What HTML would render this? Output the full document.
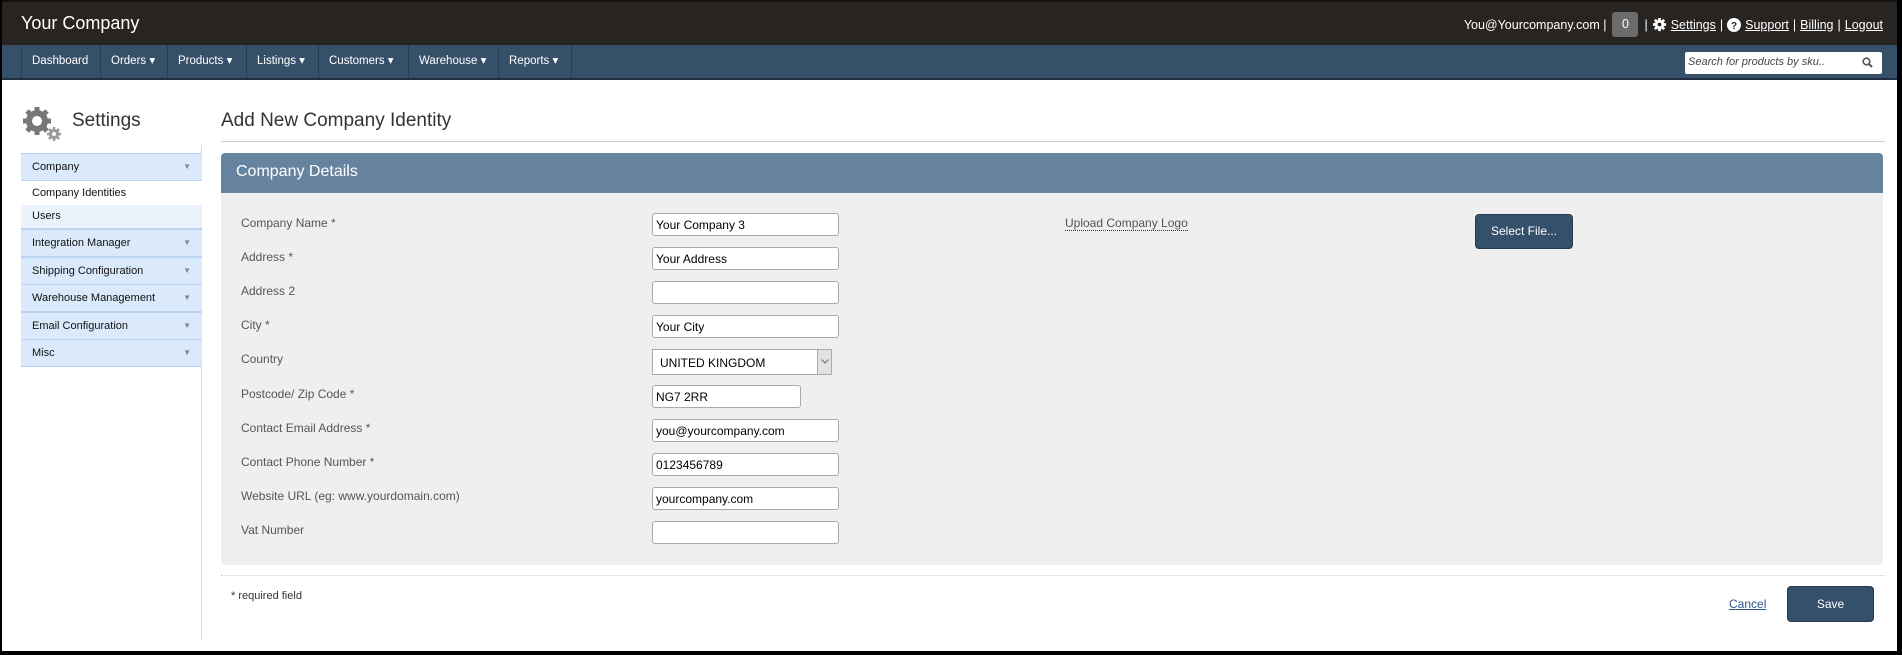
<!DOCTYPE html>
<html><head><meta charset="utf-8"><style>
*{box-sizing:border-box;margin:0;padding:0}
body{width:1902px;height:655px;overflow:hidden;background:#000;font-family:"Liberation Sans",sans-serif;position:relative}
.page{position:absolute;left:2px;top:0;width:1895px;height:651px;background:#fff}
.top{position:absolute;left:0;top:0;width:1895px;height:45px;background:#282422;border-top:2px solid #111}
.brand{position:absolute;left:19px;top:11px;color:#fff;font-size:18px}
.tr{position:absolute;right:14px;top:14px;color:#fff;font-size:12.5px;display:flex;align-items:center;gap:4px}
.tr a{color:#fff;text-decoration:underline}
.badge{display:inline-block;background:#6b6b6b;border-radius:3px;width:26px;height:25px;text-align:center;line-height:25px;margin:-4px 2px}
.nav{position:absolute;left:0;top:45px;width:1895px;height:35px;background:#36506a;border-bottom:2px solid #1e2e3e}
.nav span{position:absolute;top:0;height:33px;line-height:33px;color:#fff;font-size:11.5px;border-left:1px solid #283d52;padding-left:10px}
.search{position:absolute;left:1683px;top:7px;width:197px;height:22px;background:#fff;border-radius:2px;font-size:11px;font-style:italic;color:#444;padding:4px 3px}
.sidebar{position:absolute;left:19px;top:145px;width:181px;height:495px;border-right:1px solid #c5dcf3}
.sb{position:absolute;left:0;width:181px;font-size:11px;color:#111;padding-left:11px;background:#dbeafb;border-top:1px solid #b8d4f0;border-bottom:1px solid #b8d4f0}
.sb i{position:absolute;right:11px;font-style:normal;color:#7a8a9a;font-size:8px}
.h1{position:absolute;font-size:19px;color:#333}
.panel{position:absolute;left:221px;top:153px;width:1662px;height:412px;background:#efefef;border-radius:4px;overflow:hidden}
.ph{height:40px;background:#66849f;color:#fff;font-size:16px;padding:10px 15px}
.lab{position:absolute;left:20px;font-size:12px;color:#555}
.inp{position:absolute;left:431px;width:187px;height:23px;background:#fff;border:1px solid #aaa;border-radius:3px;font-size:12px;color:#000;padding:4px 3px}
.btn{position:absolute;background:#34506b;color:#fff;border-radius:4px;font-size:12px;text-align:center;border:1px solid #263c52}
</style></head><body><div class="page">
<div class="top"><div class="brand">Your Company</div>
<div class="tr">You@Yourcompany.com |<span class="badge">0</span>| <svg width="15" height="15" viewBox="0 0 16 16"><circle cx="8" cy="8" r="5" fill="#fff"/><g stroke="#fff" stroke-width="3"><path d="M8 1v14M1 8h14M3 3l10 10M13 3L3 13"/></g><circle cx="8" cy="8" r="2" fill="#282422"/></svg><a>Settings</a> | <svg width="14" height="14" viewBox="0 0 14 14"><circle cx="7" cy="7" r="7" fill="#fff"/><text x="7" y="11" font-size="10" font-weight="bold" text-anchor="middle" fill="#282422" font-family="Liberation Sans">?</text></svg> <a>Support</a> | <a>Billing</a> | <a>Logout</a></div></div>
<div class="nav">
<span style="left:19px;width:79px">Dashboard</span>
<span style="left:98px;width:67px">Orders ▾</span>
<span style="left:165px;width:79px">Products ▾</span>
<span style="left:244px;width:72px">Listings ▾</span>
<span style="left:316px;width:90px">Customers ▾</span>
<span style="left:406px;width:90px">Warehouse ▾</span>
<span style="left:496px;width:74px;border-right:1px solid #283d52">Reports ▾</span>
<div class="search">Search for products by sku..<svg style="position:absolute;right:9px;top:5px" width="11" height="11" viewBox="0 0 11 11"><circle cx="4.5" cy="4.5" r="3.3" fill="none" stroke="#555" stroke-width="1.6"/><path d="M7 7l3 3" stroke="#555" stroke-width="2"/></svg></div>
</div>
<svg style="position:absolute;left:20px;top:106px" width="44" height="38" viewBox="0 0 44 38"><g fill="#777"><circle cx="15" cy="15" r="11"/><g stroke="#777" stroke-width="5"><path d="M15 1v28M1 15h28M5 5l20 20M25 5L5 25"/></g></g><circle cx="15" cy="15" r="5" fill="#fff"/><g fill="#999"><circle cx="32" cy="28" r="5"/><g stroke="#999" stroke-width="2.5"><path d="M32 21v14M25 28h14M27 23l10 10M37 23L27 33"/></g></g><circle cx="32" cy="28" r="2" fill="#fff"/></svg>
<div class="h1" style="left:70px;top:110px">Settings</div>
<div class="sidebar">
<div class="sb" style="top:8px;height:28px;line-height:26px">Company<i>▼</i></div>
<div class="sb" style="top:36px;height:24px;line-height:24px;background:#fff;border:none">Company Identities</div>
<div class="sb" style="top:60px;height:24px;line-height:22px;background:#eaf3fc;border-top:none">Users</div>
<div class="sb" style="top:84px;height:28px;line-height:26px">Integration Manager<i>▼</i></div>
<div class="sb" style="top:112px;height:28px;line-height:26px">Shipping Configuration<i>▼</i></div>
<div class="sb" style="top:139px;height:28px;line-height:26px">Warehouse Management<i>▼</i></div>
<div class="sb" style="top:167px;height:28px;line-height:26px">Email Configuration<i>▼</i></div>
<div class="sb" style="top:194px;height:28px;line-height:26px">Misc<i>▼</i></div>
</div>
<div class="h1" style="left:219px;top:110px">Add New Company Identity</div>
<div style="position:absolute;left:219px;top:141px;width:1664px;height:1px;background:#ccc"></div>
<div class="panel" style="left:219px"><div class="ph">Company Details</div>
<div class="lab" style="top:63px">Company Name *</div><div class="inp" style="top:60px">Your Company 3</div>
<div class="lab" style="top:97px">Address *</div><div class="inp" style="top:94px">Your Address</div>
<div class="lab" style="top:131px">Address 2</div><div class="inp" style="top:128px"></div>
<div class="lab" style="top:165px">City *</div><div class="inp" style="top:162px">Your City</div>
<div class="lab" style="top:199px">Country</div><div class="inp" style="top:196px;width:180px;height:26px;padding:6px 7px;border-radius:0">UNITED KINGDOM<span style="position:absolute;right:0;top:0;width:14px;height:24px;background:#e2e2e2;border-left:1px solid #aaa"><svg style="position:absolute;left:3px;top:9px" width="8" height="5" viewBox="0 0 8 5"><path d="M0.5 0.5L4 4L7.5 0.5" fill="none" stroke="#666"/></svg></span></div>
<div class="lab" style="top:234px">Postcode/ Zip Code *</div><div class="inp" style="top:232px;width:149px">NG7 2RR</div>
<div class="lab" style="top:268px">Contact Email Address *</div><div class="inp" style="top:266px">you@yourcompany.com</div>
<div class="lab" style="top:302px">Contact Phone Number *</div><div class="inp" style="top:300px">0123456789</div>
<div class="lab" style="top:336px">Website URL (eg: www.yourdomain.com)</div><div class="inp" style="top:334px">yourcompany.com</div>
<div class="lab" style="top:370px">Vat Number</div><div class="inp" style="top:368px"></div>
<div style="position:absolute;left:844px;top:63px;font-size:12px;color:#555;border-bottom:1px dotted #333">Upload Company Logo</div>
<div class="btn" style="left:1254px;top:61px;width:98px;height:35px;line-height:33px">Select File...</div>
</div>
<div style="position:absolute;left:219px;top:575px;width:1664px;border-top:1px dotted #ccc"></div>
<div style="position:absolute;left:229px;top:590px;font-size:11px;color:#333">* required field</div>
<a style="position:absolute;left:1727px;top:597px;font-size:12px;color:#2a5a8a;text-decoration:underline">Cancel</a>
<div class="btn" style="left:1785px;top:586px;width:87px;height:36px;line-height:34px">Save</div>
</div></body></html>
